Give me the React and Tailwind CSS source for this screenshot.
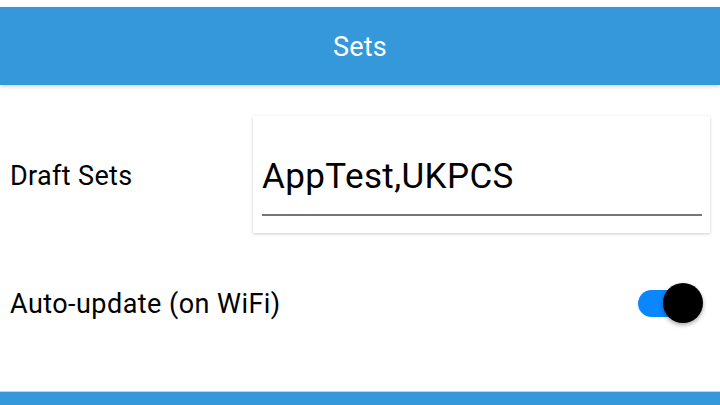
export default function App() {
  return (
    <div className="w-[720px] h-[405px] bg-white overflow-hidden flex flex-col" style={{ fontFamily: "Roboto, 'Noto Sans', sans-serif" }}>
      <div className="h-[7px] shrink-0" />
      <div className="h-[78px] shrink-0 bg-[#3498db] flex items-center justify-center pt-[2px] text-white text-[27px] tracking-[0.2px] shadow-[0_2px_4px_rgba(0,0,0,0.15)] relative z-10">
        Sets
      </div>
      <div className="mt-[31px] flex items-center">
        <div className="w-[253px] pl-[10px] pt-[4px] text-[27px] tracking-[0.35px] text-black">Draft Sets</div>
        <div className="w-[457px] h-[117px] bg-white shadow-[0_1px_3px_rgba(0,0,0,0.2)] pl-[9px] pr-[8px] pt-[40px]">
          <div className="text-[35px] leading-[41px] tracking-[0.4px] text-black">AppTest,UKPCS</div>
          <div className="mt-[17px] h-[2px] bg-[#757575]" />
        </div>
      </div>
      <div className="mt-[50px] flex items-center justify-between h-[40px] pl-[10px] pr-[17px]">
        <div className="pt-[3px] text-[27px] tracking-[0.45px] text-black">Auto-update (on WiFi)</div>
        <div className="relative w-[65px] h-[40px] flex items-center">
          <div className="w-[52px] h-[27px] rounded-full bg-[#0a86ff]" />
          <div className="absolute right-0 top-0 w-[40px] h-[40px] rounded-full bg-black shadow-[0_2px_4px_rgba(0,0,0,0.35)]" />
        </div>
      </div>
      <div className="flex-1" />
      <div className="h-[14px] shrink-0 bg-[#3498db] border-t border-[#d0d0d0]" />
    </div>
  );
}
